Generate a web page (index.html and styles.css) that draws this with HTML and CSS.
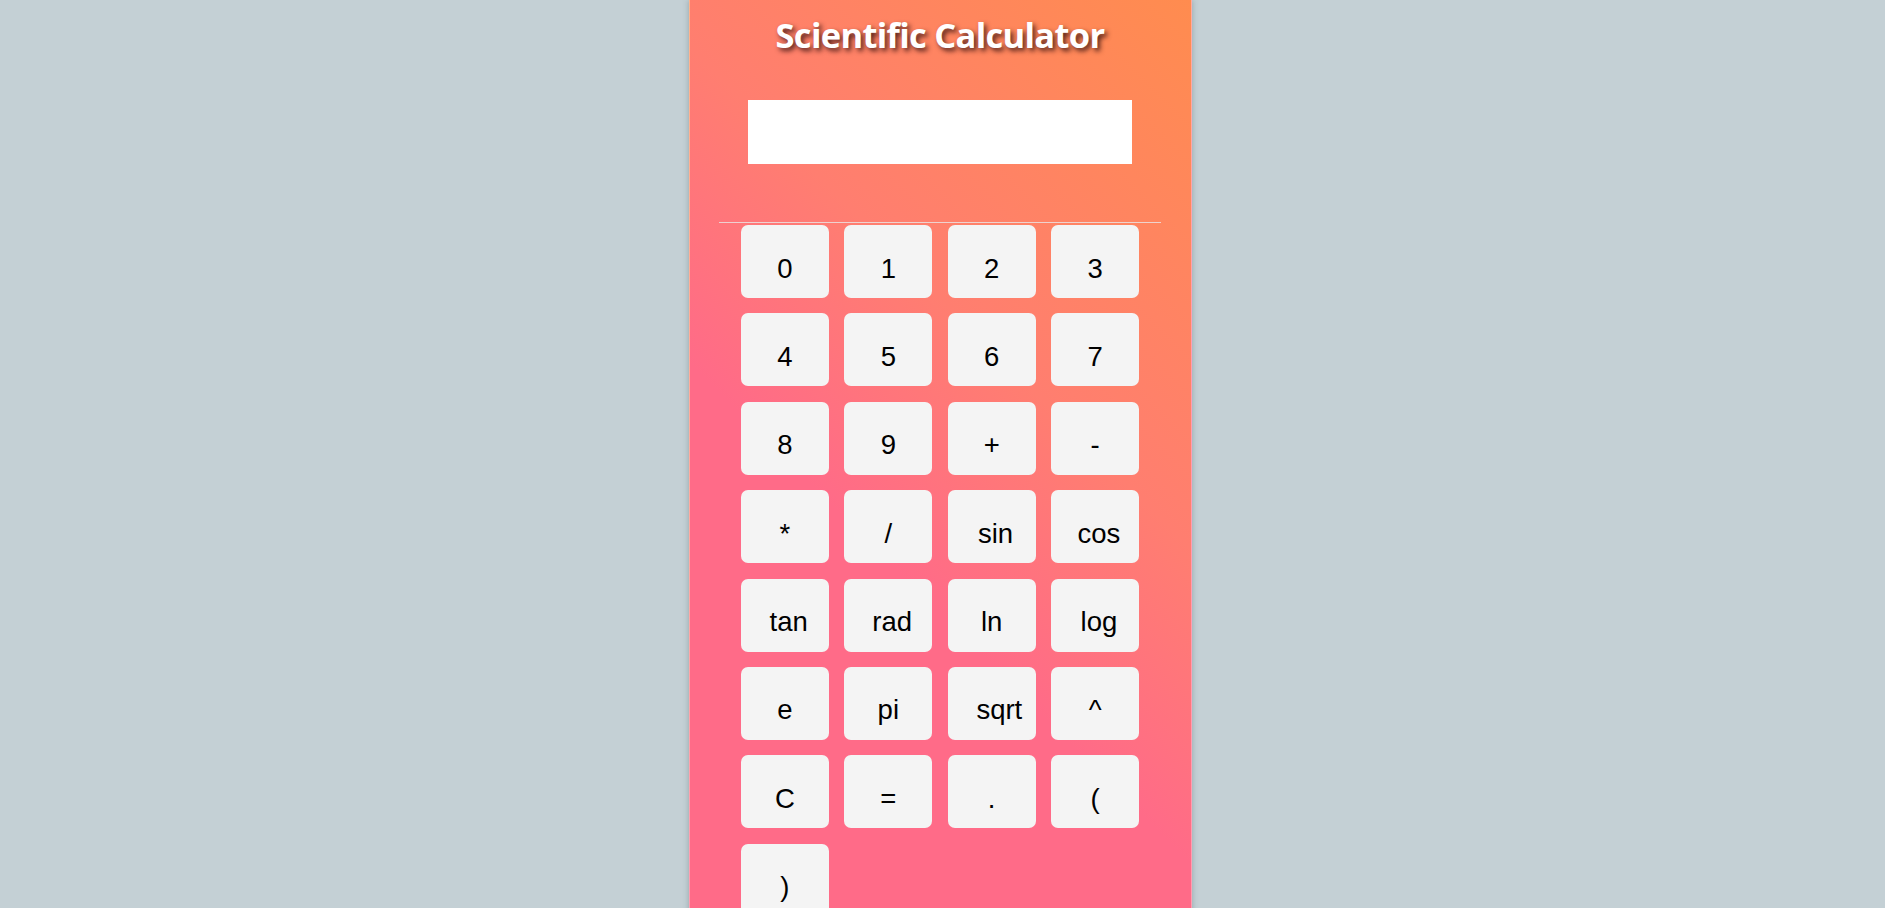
FILE: index.html
```html
<!DOCTYPE html>
<html lang="en">
<head>
<meta charset="utf-8">
<title>Scientific Calculator</title>
<link rel="stylesheet" href="styles.css">
</head>
<body>
<div class="calc">
  <h1 class="title">Scientific Calculator</h1>
  <input class="display" type="text" aria-label="display">
  <hr class="divider">
  <div class="keys">
    <button class="key">0</button>
    <button class="key">1</button>
    <button class="key">2</button>
    <button class="key">3</button>
    <button class="key">4</button>
    <button class="key">5</button>
    <button class="key">6</button>
    <button class="key">7</button>
    <button class="key">8</button>
    <button class="key">9</button>
    <button class="key">+</button>
    <button class="key">-</button>
    <button class="key">*</button>
    <button class="key">/</button>
    <button class="key">&nbsp;sin</button>
    <button class="key">&nbsp;cos</button>
    <button class="key">&nbsp;tan</button>
    <button class="key">&nbsp;rad</button>
    <button class="key">ln</button>
    <button class="key">&nbsp;log</button>
    <button class="key">e</button>
    <button class="key">pi</button>
    <button class="key">&nbsp;&nbsp;sqrt</button>
    <button class="key">^</button>
    <button class="key">C</button>
    <button class="key">=</button>
    <button class="key">.</button>
    <button class="key">(</button>
    <button class="key">)</button>
  </div>
</div>
</body>
</html>
```

FILE: styles.css
```css
html, body {
  margin: 0;
  padding: 0;
}

body {
  background: #c4d0d5;
  font-family: "Liberation Sans", Arial, sans-serif;
}

.calc {
  box-sizing: border-box;
  width: 503px;
  margin-left: calc(50% - 254px);
  padding: 0 0 24px;
  border-left: 1px solid rgba(255, 255, 255, 0.35);
  border-right: 1px solid rgba(255, 255, 255, 0.35);
  box-shadow: 0 0 6px rgba(60, 80, 90, 0.35);
  background: linear-gradient(45deg, #ff6b88 0%, #ff6b88 40%, #ff7e70 62%, #ff8c4f 100%);
}

.title {
  margin: 0;
  padding-top: 11.5px;
  font-family: "Open Sans", "Noto Sans", sans-serif;
  font-weight: 700;
  font-size: 34.5px;
  line-height: 46px;
  letter-spacing: -0.7px;
  text-align: center;
  color: #fff;
  text-shadow: 2.5px 2.5px 5px rgba(40, 10, 10, 0.8);
}

.display {
  display: block;
  box-sizing: border-box;
  width: 384px;
  height: 64px;
  margin: 42.5px auto 0;
  padding: 0 10px;
  border: none;
  outline: none;
  background: #fff;
  font-size: 24px;
}

.divider {
  width: 442px;
  height: 0;
  margin: 58px auto 0;
  border: none;
  border-top: 1px solid rgba(235, 225, 225, 0.85);
}

.keys {
  display: grid;
  grid-template-columns: repeat(4, 88px);
  column-gap: 15.4px;
  row-gap: 15.4px;
  justify-content: center;
  margin-top: 2px;
}

.key {
  box-sizing: border-box;
  height: 73px;
  padding: 27.5px 0 13.5px;
  border: none;
  border-radius: 7px;
  background: #f4f4f4;
  color: #000;
  font-family: "Liberation Sans", Arial, sans-serif;
  font-size: 27.5px;
  line-height: 32px;
  text-align: center;
  white-space: pre;
}
```
